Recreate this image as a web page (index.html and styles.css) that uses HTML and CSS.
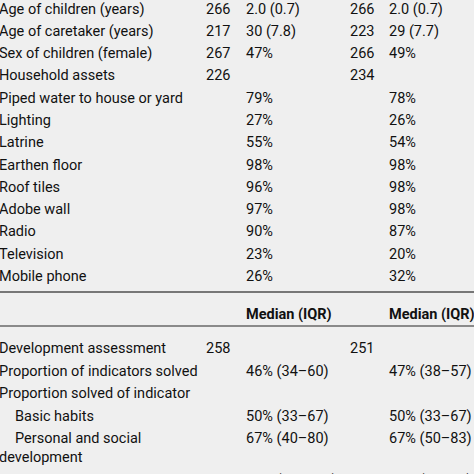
FILE: index.html
```html
<!DOCTYPE html>
<html lang="en">
<head>
    <meta charset="UTF-8">
    <title>Table</title>
    <link rel="stylesheet" href="styles.css">
</head>
<body>
    <table class="data">
        <colgroup>
            <col class="c-label">
            <col class="c-n">
            <col class="c-val">
            <col class="c-n2">
            <col class="c-val2">
        </colgroup>
        <tbody>
            <tr><td>Age of children (years)</td><td class="n">266</td><td class="v">2.0 (0.7)</td><td class="n">266</td><td class="v">2.0 (0.7)</td></tr>
            <tr><td>Age of caretaker (years)</td><td class="n">217</td><td class="v">30 (7.8)</td><td class="n">223</td><td class="v">29 (7.7)</td></tr>
            <tr><td>Sex of children (female)</td><td class="n">267</td><td class="v">47%</td><td class="n">266</td><td class="v">49%</td></tr>
            <tr><td>Household assets</td><td class="n">226</td><td class="v"></td><td class="n">234</td><td class="v"></td></tr>
            <tr><td>Piped water to house or yard</td><td class="n"></td><td class="v">79%</td><td class="n"></td><td class="v">78%</td></tr>
            <tr><td>Lighting</td><td class="n"></td><td class="v">27%</td><td class="n"></td><td class="v">26%</td></tr>
            <tr><td>Latrine</td><td class="n"></td><td class="v">55%</td><td class="n"></td><td class="v">54%</td></tr>
            <tr><td>Earthen floor</td><td class="n"></td><td class="v">98%</td><td class="n"></td><td class="v">98%</td></tr>
            <tr><td>Roof tiles</td><td class="n"></td><td class="v">96%</td><td class="n"></td><td class="v">98%</td></tr>
            <tr><td>Adobe wall</td><td class="n"></td><td class="v">97%</td><td class="n"></td><td class="v">98%</td></tr>
            <tr><td>Radio</td><td class="n"></td><td class="v">90%</td><td class="n"></td><td class="v">87%</td></tr>
            <tr><td>Television</td><td class="n"></td><td class="v">23%</td><td class="n"></td><td class="v">20%</td></tr>
            <tr class="last"><td>Mobile phone</td><td class="n"></td><td class="v">26%</td><td class="n"></td><td class="v">32%</td></tr>
        </tbody>
        <tbody class="sub">
            <tr class="head"><td></td><td></td><th class="v">Median (IQR)</th><td></td><th class="v">Median (IQR)</th></tr>
            <tr class="first"><td>Development assessment</td><td class="n">258</td><td class="v"></td><td class="n">251</td><td class="v"></td></tr>
            <tr><td>Proportion of indicators solved</td><td class="n"></td><td class="v">46% (34–60)</td><td class="n"></td><td class="v">47% (38–57)</td></tr>
            <tr><td>Proportion solved of indicator</td><td class="n"></td><td class="v"></td><td class="n"></td><td class="v"></td></tr>
            <tr><td class="indent">Basic habits</td><td class="n"></td><td class="v">50% (33–67)</td><td class="n"></td><td class="v">50% (33–67)</td></tr>
            <tr><td class="indent">Personal and social<br>development</td><td class="n"></td><td class="v">67% (40–80)</td><td class="n"></td><td class="v">67% (50–83)</td></tr>
            <tr><td class="indent">Gross motor skills</td><td class="n"></td><td class="v">83% (40–100)</td><td class="n"></td><td class="v">83% (50–83)</td></tr>
        </tbody>
    </table>
</body>
</html>
```

FILE: styles.css
```css
/* Page */
body {
    margin: 0;
    padding: 0;
    background: #efefef;
    color: #111;
    font-family: Roboto, "Liberation Sans", sans-serif;
    font-size: 14.5px;
    overflow: hidden;
}

/* Table */
.data {
    border-collapse: collapse;
    table-layout: fixed;
    width: 480px;
    margin: -2px 0 0 -1px;
}

.c-label { width: 207px; }
.c-n { width: 24px; }
.c-val { width: 120px; }
.c-n2 { width: 23px; }
.c-val2 { width: 106px; }

.data td,
.data th {
    padding: 1.65px 0;
    line-height: 19px;
    text-align: left;
    vertical-align: top;
    white-space: nowrap;
}

.data .sub td {
    padding-top: 1.8px;
    padding-bottom: 1.8px;
}

.data td.n {
    text-align: right;
}

.data .v {
    padding-left: 16px;
}

.data th {
    font-weight: bold;
}

/* Sub-items: first line indented, wrapped lines flush left */
.data td.indent {
    text-indent: 16px;
}

/* Section borders */
.data tr.last td {
    padding-bottom: 4.5px;
}

.data tr.head td,
.data tr.head th {
    border-top: 2px solid #777;
    border-bottom: 2px solid #8a8a8a;
    padding-top: 12.5px;
    padding-bottom: 0.5px;
}

.data tr.head th {
    padding-left: 16px;
}

.data tr.first td {
    padding-top: 12.5px;
}
```
